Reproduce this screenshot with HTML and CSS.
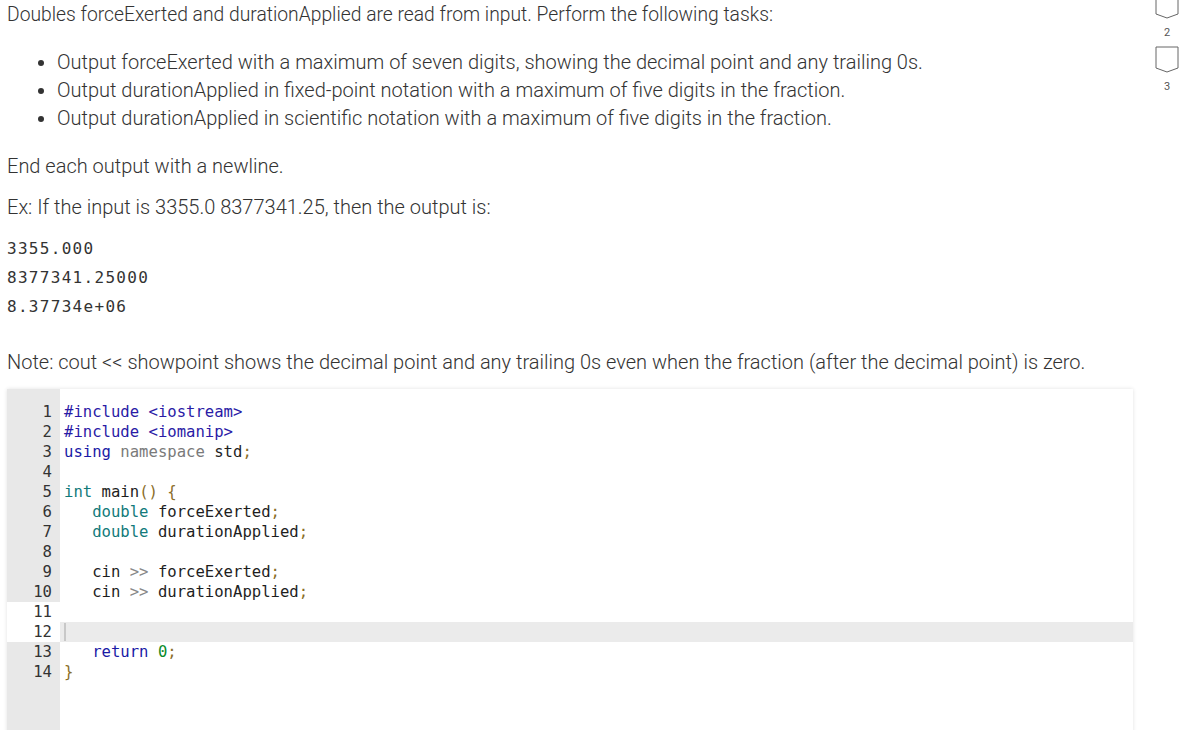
FILE: index.html
```html
<!DOCTYPE html>
<html>
<head>
<meta charset="utf-8">
<link rel="stylesheet" href="styles.css">
</head>
<body>
<div class="page">
  <main class="main">
    <p class="intro">Doubles forceExerted and durationApplied are read from input. Perform the following tasks:</p>
    <ul class="tasks">
      <li>Output forceExerted with a maximum of seven digits, showing the decimal point and any trailing 0s.</li>
      <li>Output durationApplied in fixed-point notation with a maximum of five digits in the fraction.</li>
      <li>Output durationApplied in scientific notation with a maximum of five digits in the fraction.</li>
    </ul>
    <p class="para p-end">End each output with a newline.</p>
    <p class="para p-ex">Ex: If the input is 3355.0 8377341.25, then the output is:</p>
    <div class="output">
      <div>3355.000</div>
      <div>8377341.25000</div>
      <div>8.37734e+06</div>
    </div>
    <p class="para p-note">Note: cout &lt;&lt; showpoint shows the decimal point and any trailing 0s even when the fraction (after the decimal point) is zero.</p>
    <div class="editor">
      <div class="gutter">
        <div class="ln">1</div><div class="ln">2</div><div class="ln">3</div><div class="ln">4</div><div class="ln">5</div><div class="ln">6</div><div class="ln">7</div><div class="ln">8</div><div class="ln">9</div><div class="ln">10</div><div class="ln active">11</div><div class="ln active">12</div><div class="ln">13</div><div class="ln">14</div>
      </div>
      <div class="code">
        <div class="line"><span class="pp">#include &lt;iostream&gt;</span></div>
        <div class="line"><span class="pp">#include &lt;iomanip&gt;</span></div>
        <div class="line"><span class="kw">using</span> <span class="ns">namespace</span> std<span class="pu">;</span></div>
        <div class="line"> </div>
        <div class="line"><span class="ty">int</span> main<span class="pu">()</span> <span class="pu">{</span></div>
        <div class="line">   <span class="ty">double</span> forceExerted<span class="pu">;</span></div>
        <div class="line">   <span class="ty">double</span> durationApplied<span class="pu">;</span></div>
        <div class="line"> </div>
        <div class="line">   cin <span class="op">&gt;&gt;</span> forceExerted<span class="pu">;</span></div>
        <div class="line">   cin <span class="op">&gt;&gt;</span> durationApplied<span class="pu">;</span></div>
        <div class="line"> </div>
        <div class="line current"><span class="cursor"></span></div>
        <div class="line">   <span class="kw">return</span> <span class="num">0</span><span class="pu">;</span></div>
        <div class="line"><span class="pu">}</span></div>
      </div>
    </div>
  </main>
  <aside class="side">
    <div class="step first">
      <svg class="tag" width="24" height="20" viewBox="0 0 24 20"><path d="M1 -2 V14 L12 18 L23 14 V-2" fill="none" stroke="#666" stroke-width="1"/></svg>
      <span class="num-label">2</span>
    </div>
    <div class="step">
      <svg class="tag" width="24" height="28" viewBox="0 0 24 28"><path d="M1 1 H23 V22 L12 26 L1 22 Z" fill="none" stroke="#666" stroke-width="1"/></svg>
      <span class="num-label">3</span>
    </div>
  </aside>
</div>
</body>
</html>
```

FILE: styles.css
```css
html, body {
  margin: 0;
  padding: 0;
  background: #fff;
}
body {
  font-family: Roboto, "Liberation Sans", sans-serif;
  font-weight: 300;
  color: #333;
  font-size: 20px;
  overflow: hidden;
  height: 730px;
}
.page {
  display: flex;
  height: 730px;
}
.main {
  width: 1126px;
  padding-left: 7px;
  flex: none;
}
p {
  margin: 0;
}
.intro {
  font-size: 19.3px;
  line-height: 28px;
  margin-top: 1px;
}
.tasks {
  margin: 19px 0 0 0;
  padding-left: 50px;
  line-height: 28px;
}
.para {
  line-height: 28px;
}
.p-end { margin-top: 20px; }
.p-ex { margin-top: 13px; }
.output {
  margin-top: 13px;
  font-family: "DejaVu Sans Mono", "Liberation Mono", monospace;
  font-weight: 400;
  font-size: 16px;
  letter-spacing: 1.3px;
  line-height: 29px;
  color: #333;
}
.p-note { margin-top: 27px; }
.editor {
  margin-top: 13px;
  display: flex;
  background: #fff;
  box-shadow: 0 0 4px rgba(0,0,0,0.12);
  height: 360px;
  font-family: "DejaVu Sans Mono", "Liberation Mono", monospace;
  font-weight: 400;
  font-size: 15.6px;
  line-height: 20px;
  color: #1e1e1e;
}
.gutter {
  width: 53px;
  flex: none;
  background: #e8e8e8;
  padding-top: 13px;
  color: #333;
}
.ln {
  text-align: right;
  padding-right: 8px;
  height: 20px;
}
.ln.active {
  background: #fff;
}
.code {
  flex: 1;
  padding-top: 13px;
}
.line {
  white-space: pre;
  height: 20px;
  padding-left: 4px;
}
.line.current {
  background: #ebebeb;
  position: relative;
}
.cursor {
  position: absolute;
  left: 4px;
  top: 1px;
  width: 2px;
  height: 18px;
  background: #c8c8c8;
}
.pp { color: #2a1ba6; }
.kw { color: #1a1aa6; }
.ty { color: #127a7a; }
.ns { color: #7a7a7a; }
.pu { color: #8a6d28; }
.op { color: #888; }
.num { color: #0a8a2a; }
.side {
  flex: 1;
  display: flex;
  flex-direction: column;
  align-items: center;
  padding-left: 4px;
}
.step {
  display: flex;
  flex-direction: column;
  align-items: center;
}
.tag { display: block; }
.num-label {
  font-family: Roboto, "Liberation Sans", sans-serif;
  font-size: 11px;
  font-weight: 400;
  color: #555;
  margin-top: 6px;
  line-height: 14px;
}
.step + .step { margin-top: 6px; }
```
